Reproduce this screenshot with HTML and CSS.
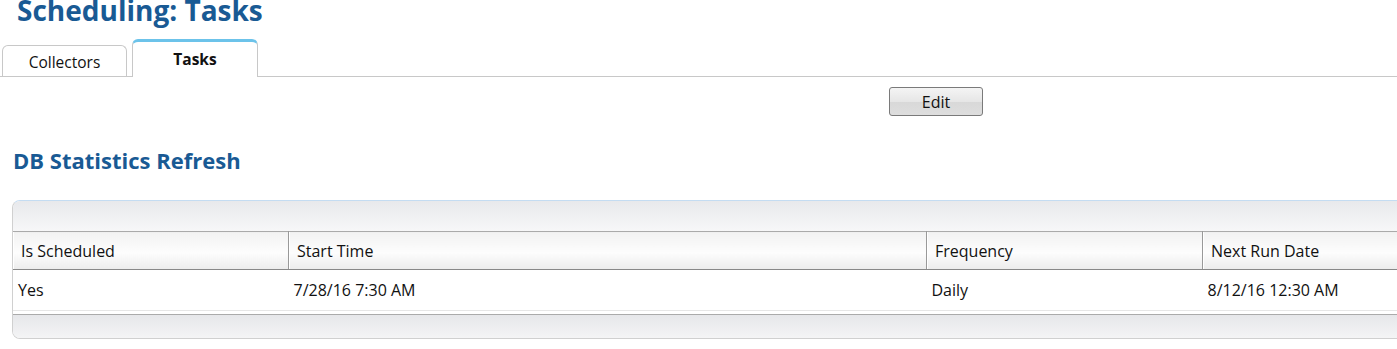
FILE: index.html
```html
<!DOCTYPE html>
<html lang="en">
<head>
<meta charset="UTF-8">
<meta name="viewport" content="width=device-width, initial-scale=1.0">
<title>Scheduling: Tasks</title>
<link rel="stylesheet" href="styles.css">
</head>
<body>
    <h1 class="page-title">Scheduling: Tasks</h1>
    <div class="tabs">
        <div class="tab">Collectors</div>
        <div class="tab active">Tasks</div>
    </div>
    <div class="actions">
        <button class="btn">Edit</button>
    </div>
    <h2 class="section-title">DB Statistics Refresh</h2>
    <div class="panel">
        <div class="panel-toolbar"></div>
        <table class="grid">
            <thead>
                <tr>
                    <th class="col-1">Is Scheduled</th>
                    <th class="col-2">Start Time</th>
                    <th class="col-3">Frequency</th>
                    <th>Next Run Date</th>
                </tr>
            </thead>
            <tbody>
                <tr>
                    <td>Yes</td>
                    <td>7/28/16 7:30 AM</td>
                    <td>Daily</td>
                    <td>8/12/16 12:30 AM</td>
                </tr>
            </tbody>
        </table>
        <div class="panel-footer"></div>
    </div>
</body>
</html>
```

FILE: styles.css
```css
body {
    margin: 0;
    padding: 0;
    font-family: 'Open Sans', 'Noto Sans', sans-serif;
    color: #111;
    background: #fff;
    overflow: hidden;
}
.page-title {
    margin: -7px 0 0 17px;
    font-size: 28px;
    line-height: 34px;
    font-weight: bold;
    color: #195a94;
}
.tabs {
    display: flex;
    align-items: flex-end;
    gap: 5px;
    margin-top: 11px;
    padding-left: 2px;
    height: 38px;
    border-bottom: 1px solid #c8c8c8;
}
.tab {
    box-sizing: border-box;
    width: 125px;
    height: 31px;
    border: 1px solid #c8c8c8;
    border-bottom: none;
    border-radius: 6px 6px 0 0;
    background: #fff;
    text-align: center;
    font-size: 15.5px;
    line-height: 32px;
}
.tab.active {
    width: 126px;
    height: 38px;
    margin-bottom: -1px;
    border-top: 3px solid #6cc3ea;
    font-weight: bold;
    line-height: 34px;
}
.actions {
    padding: 10px 0 0 889px;
}
.btn {
    width: 94px;
    height: 29px;
    font-family: 'Open Sans', 'Noto Sans', sans-serif;
    font-size: 16px;
    color: #111;
    background: linear-gradient(#f4f4f4, #e6e6e6 50%, #d8d8d8 51%, #dedede);
    border: 1px solid #7a7a7a;
    border-radius: 3px;
    padding: 0;
}
.section-title {
    margin: 31px 0 0 13px;
    font-size: 22px;
    line-height: 27px;
    font-weight: bold;
    color: #195a94;
}
.panel {
    margin: 26px -40px 0 12px;
    border: 1px solid #d0d0d0;
    border-top-color: #c4dcf2;
    border-radius: 8px;
    overflow: hidden;
}
.panel-toolbar {
    height: 30px;
    background: linear-gradient(#e8e9ec, #f7f7f8);
}
.grid {
    width: 1425px;
    border-collapse: collapse;
    font-size: 16px;
}
.grid th {
    height: 37px;
    padding: 0 8px;
    text-align: left;
    font-weight: normal;
    background: linear-gradient(#f2f2f2, #fdfdfd 55%, #ececec);
    border-top: 1px solid #aaa;
    border-bottom: 1px solid #888;
    border-right: 1px solid #999;
    box-shadow: inset 1px 0 0 #fff;
}
.grid .col-1 { width: 259px; }
.grid .col-2 { width: 621px; }
.grid .col-3 { width: 259px; }
.grid td {
    height: 40px;
    padding: 0 6px 0 5px;
    border-bottom: 1px solid #e6e6e6;
}
.panel-footer {
    height: 23px;
    margin-top: 3px;
    border-top: 1px solid #aaa;
    background: linear-gradient(#e6e7ea, #f4f4f5);
}
```
